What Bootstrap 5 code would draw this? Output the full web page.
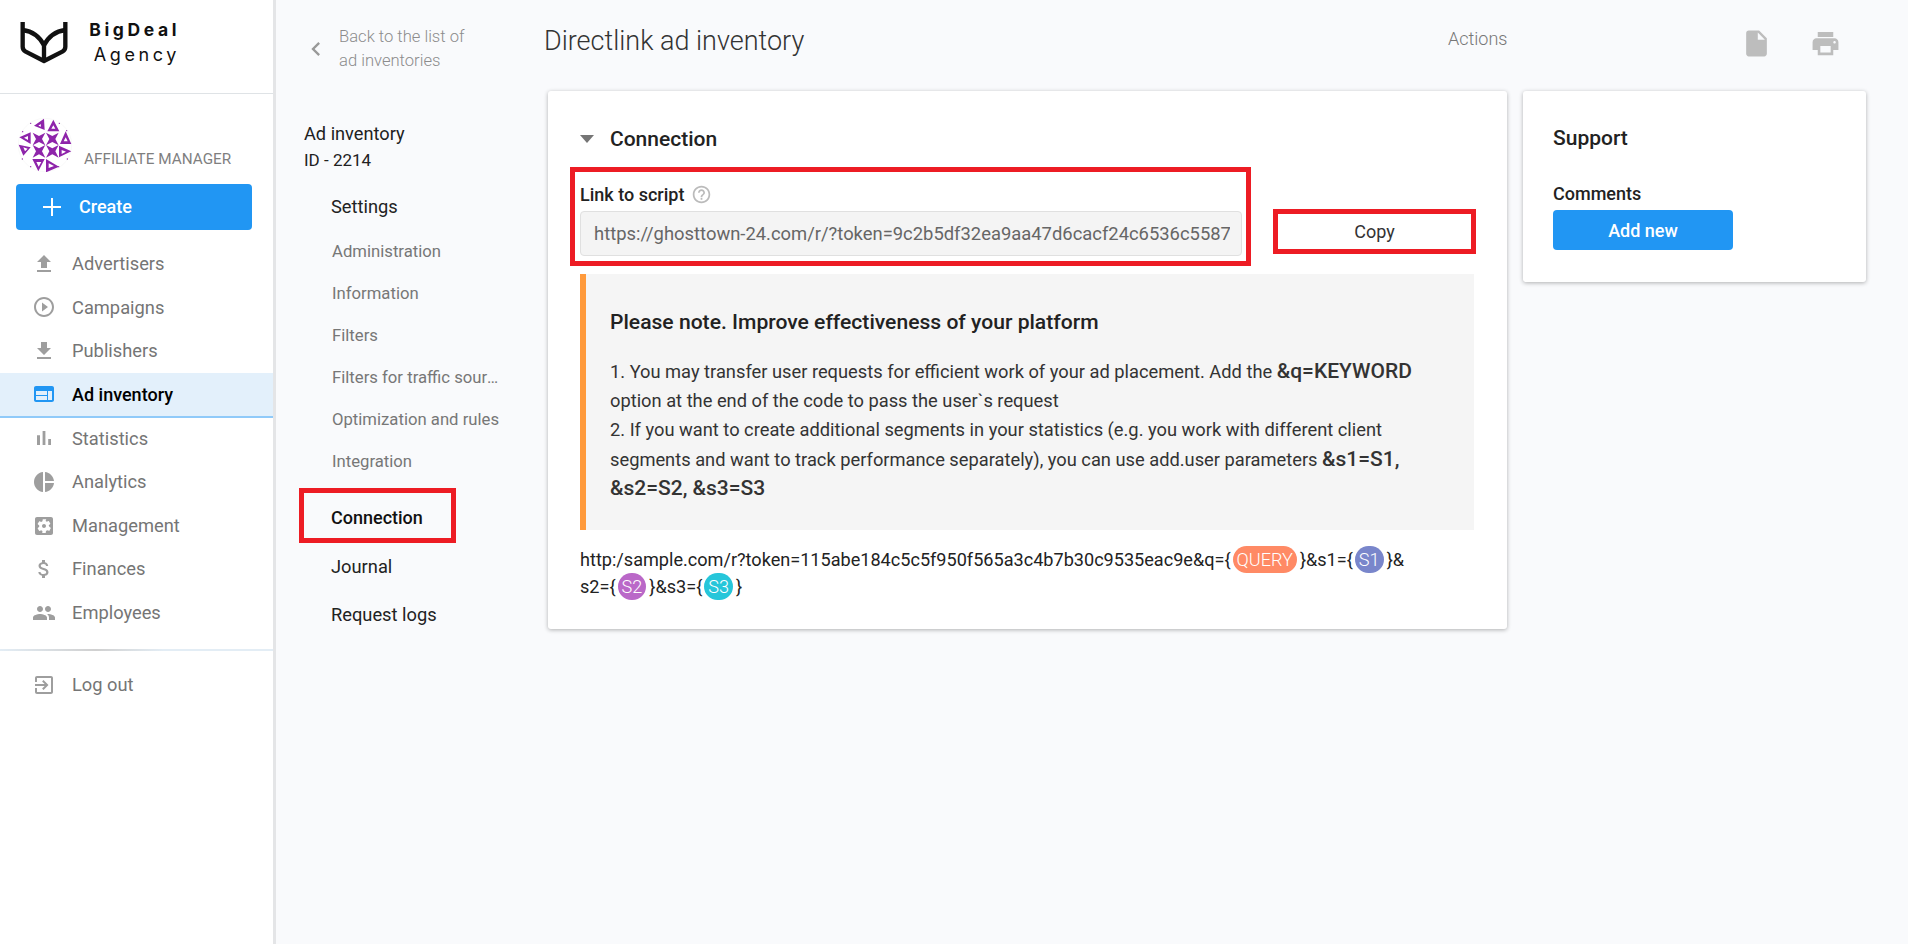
<!DOCTYPE html>
<html lang="en"><head><meta charset="utf-8"><title>Directlink ad inventory</title>
<link href="https://cdn.jsdelivr.net/npm/bootstrap@5.3.0/dist/css/bootstrap.min.css" rel="stylesheet">
<style>
html,body{height:100%}
body{background:#f9fafc;font-family:Roboto,"Liberation Sans",sans-serif;color:#212121;overflow:hidden;font-size:18px}
.shell{height:944px}
.side{width:276px;background:#fff;border-right:3px solid #e4e5e7;flex:none}
.brand{height:94px;border-bottom:1px solid #dfe3e6;padding:16px 0 0 14px;gap:12px}
.brand-txt{font-family:Inter,"Open Sans",sans-serif;color:#111;line-height:25px;letter-spacing:3.6px;font-size:18px;text-align:right;width:94px;margin-top:1px}
.brand-txt b{font-weight:700;display:block;letter-spacing:3.6px;font-size:17.5px}
.prof{padding:24px 0 0 18px;height:90px}
.prof span{font-size:15.3px;color:#7f7f7f;margin:0 0 0 12px;padding-top:30px}
.create{margin:0 0 12px 16px;width:236px;height:46px;background:#2196f3;border:0;border-radius:4px;color:#fff;font-weight:500;font-size:18px;padding:0 0 1px 27px;gap:18px}
.create:hover{background:#2196f3;color:#fff}
.mi{height:43.55px;color:#757575;font-size:18.3px;text-decoration:none;padding-left:32px;gap:16px}
.mi svg{width:24px;height:24px;fill:#9e9e9e;flex:none}
.mi.on{background:#e3f0fb;color:#000;font-weight:500;font-size:18px;border-bottom:2px solid #90caf9;height:45px;margin-bottom:-1px}
.mi.on svg{fill:#2196f3}
.rule{height:2px;margin:15px 0 12px;background:linear-gradient(90deg,#e3edf5,#d0d0d0 35%,#e3edf5 60%)}
.sub{width:264px;flex:none;padding:0 0 0 12px}
.back{height:92px;padding:6px 0 0 14px;color:#8c8c8c;font-weight:300;font-size:16.6px;line-height:24px;gap:9px;text-decoration:none}
.back svg{width:28px;height:28px;fill:#999;flex:none}
.fade{height:2px;width:237px;background:linear-gradient(90deg,transparent,#aaa 45%,transparent)}
.subhead{padding:27px 0 0 16px;line-height:26px;font-size:18.2px}
.subhead span{font-size:17px}
.subnav{margin-top:10px}
.l1{display:block;color:#222;text-decoration:none;font-size:18.3px;height:48px;line-height:48px;padding-left:43px}
.l2{display:block;color:#777;text-decoration:none;font-size:16.7px;height:42px;line-height:42px;padding:0 36px 0 44px;white-space:nowrap;overflow:hidden;text-overflow:ellipsis}
.l1.mark-box{border:5px solid #ed1c24;width:157px;height:55px;line-height:50px;font-weight:500;font-size:18px;padding-left:27px;margin:5px 0 0 11px;color:#111}
.main{width:1326px;padding-left:8px;flex:none}
.head{height:91px}
.title{font-size:27px;font-weight:300;color:#333;margin:0 0 0 -4px;padding-top:25px;width:904px;line-height:32px}
.acts{font-size:18px;font-weight:300;color:#777;padding-top:27px;width:292.5px;line-height:24px}
.headicon{width:31px;height:31px;fill:#bdbdbd;margin-top:27.5px}
.headicon+.headicon{margin-left:38px}
.pane{background:#fff;border:0;border-radius:3px;box-shadow:0 1px 4px rgba(0,0,0,.3)}
.pane1{width:959px;height:538px;padding:33px 33px 0 33px}
.pane2{width:343px;height:191px;padding:32px 30px;margin-left:16px}
.ctitle{font-size:21px;font-weight:500;line-height:30px;color:#222;margin:0}
.tri{width:0;height:0;border:7px solid transparent;border-top:8px solid #757575;border-bottom:0;margin:0 16px 0 -1px}
.red1{border:5px solid #ed1c24;flex:none;width:681px;height:99px;padding:11px 4px 0 5px;margin:13px 0 0 -11px}
.lab{font-weight:500;font-size:18px;line-height:24px;margin-bottom:4px;color:#222}
.lab svg{width:21px;height:21px;fill:#bbb;margin-left:2px;vertical-align:-4px}
.inp{height:45px;background:#f4f4f4!important;border:1px solid #e0e0e0;border-radius:4px;color:#666;font-size:18.4px;padding:0 11px 0 13px}
.copyb{border:5px solid #ed1c24;border-radius:0;background:#fff;flex:none;width:203px;height:45px;margin:55px 0 0 22px;color:#333;font-size:18px;padding:0}
.note{background:#f5f5f5;border-left:6px solid #ff9a3c;margin:8px 0 0 -1px;width:894px;height:256px;padding:30px 50px 0 24px;font-size:18.3px;line-height:29px;color:#333}
.note h5{font-size:21.1px;font-weight:500;margin:3px 0 20px;line-height:30px;color:#222}
.note b{font-weight:500;font-size:21px;line-height:1}
.note .gap{line-height:29.5px}
.samp{margin:16px 0 0 -1px;font-size:18.1px;line-height:27px;color:#222}
.chip{display:inline-block;color:#fff;font-weight:300;line-height:27px;height:27px;border-radius:14px;padding:0 4px;min-width:28px;text-align:center;margin:0 3px 0 2px}
.addb{background:#2196f3;border:0;border-radius:4px;width:180px;height:42px;color:#fff;font-weight:500;font-size:18px;padding:0}
.addb:hover{background:#2196f3;color:#fff}
.cmts{margin-top:29px}
</style></head><body>
<div class="shell d-flex">
<aside class="side">
  <div class="brand d-flex align-items-start">
    <svg width="60" height="50" viewBox="0 0 180 150"><g fill="none" stroke="#111" stroke-width="13" stroke-linejoin="round"><path d="M26 18V92Q26 102 35 107L90 135L145 107Q154 102 154 92V18"/><path d="M26 42Q70 48 90 88Q110 48 154 42"/><path d="M90 86V132"/></g></svg>
    <div class="brand-txt"><b>BigDeal</b>Agency</div>
  </div>
  <div class="prof d-flex align-items-start">
    <svg width="54" height="54" viewBox="12 12 162 162"><circle cx="93" cy="93" r="80" fill="#fff" stroke="#eee" stroke-width="1"/>
    <g fill="#8e24aa"><path d="M90 14 60 35 92 48ZM118 17 100 52H136ZM16 70 50 55V90ZM155 52 138 90H172ZM14 92 50 100 28 125ZM135 95V130L172 112ZM55 135H92L73 172ZM96 135V175L135 158Z"/>
    <path d="M56 56 75 66 94 56 84 75 94 94 75 84 56 94 66 75ZM96 56 115 66 134 56 124 75 134 94 115 84 96 94 106 75ZM56 93 75 103 94 93 84 112 94 131 75 121 56 131 66 112ZM96 93 115 103 134 93 124 112 134 131 115 121 96 131 106 112Z"/>
    <circle cx="50" cy="28" r="2"/><circle cx="136" cy="28" r="2"/><circle cx="158" cy="50" r="2"/><circle cx="26" cy="53" r="2"/><circle cx="50" cy="158" r="2"/><circle cx="134" cy="158" r="2"/><circle cx="25" cy="135" r="2"/><circle cx="160" cy="135" r="2"/></g>
    <g fill="#fff"><path d="M80 30 73 35 81 38ZM118 34 112 44H124ZM30 71 42 66V78ZM155 70 149 82H161ZM28 100 41 104 33 112ZM143 108V120L156 113ZM67 144H82L74 158ZM104 148V162L120 156Z"/></g></svg>
    <span>AFFILIATE MANAGER</span>
  </div>
  <button class="btn create d-flex align-items-center" type="button"><svg width="18" height="18" viewBox="0 0 18 18"><path d="M8 0h2v8h8v2h-8v8H8v-8H0V8h8z" fill="#fff"/></svg>Create</button>
  <nav>
    <a class="mi d-flex align-items-center" href="#"><svg viewBox="0 0 24 24"><path d="M9 16h6v-6h4l-7-7-7 7h4zm-4 2h14v2H5z"/></svg>Advertisers</a>
    <a class="mi d-flex align-items-center" href="#"><svg viewBox="0 0 24 24"><path d="M10 16.5l6-4.5-6-4.5v9zM12 2C6.48 2 2 6.48 2 12s4.48 10 10 10 10-4.48 10-10S17.52 2 12 2zm0 18c-4.41 0-8-3.59-8-8s3.59-8 8-8 8 3.59 8 8-3.59 8-8 8z"/></svg>Campaigns</a>
    <a class="mi d-flex align-items-center" href="#"><svg viewBox="0 0 24 24"><path d="M19 9h-4V3H9v6H5l7 7 7-7zM5 18v2h14v-2H5z"/></svg>Publishers</a>
    <a class="mi on d-flex align-items-center" href="#"><svg viewBox="0 0 24 24"><path d="M20 4H4c-1.1 0-1.99.9-1.99 2L2 18c0 1.1.9 2 2 2h16c1.1 0 2-.9 2-2V6c0-1.1-.9-2-2-2zm-5 14H4v-4h11v4zm0-5H4V9h11v4zm5 5h-4V9h4v9z"/></svg>Ad inventory</a>
    <a class="mi d-flex align-items-center" href="#"><svg viewBox="0 0 24 24"><path d="M5 9.2h3V19H5zM10.6 5h2.8v14h-2.8zm5.6 8H19v6h-2.8z"/></svg>Statistics</a>
    <a class="mi d-flex align-items-center" href="#"><svg viewBox="0 0 24 24"><path d="M11 2v20c-5.07-.5-9-4.79-9-10s3.93-9.5 9-10zm2.03 0v8.99H22c-.47-4.74-4.24-8.52-8.97-8.99zm0 11.01V22c4.74-.47 8.5-4.25 8.97-8.99h-8.97z"/></svg>Analytics</a>
    <a class="mi d-flex align-items-center" href="#"><svg viewBox="0 0 24 24"><path d="M12 10c-1.1 0-2 .9-2 2s.9 2 2 2 2-.9 2-2-.9-2-2-2zm7-7H5c-1.11 0-2 .9-2 2v14c0 1.1.89 2 2 2h14c1.11 0 2-.9 2-2V5c0-1.1-.89-2-2-2zm-1.75 9c0 .23-.02.46-.05.68l1.48 1.16c.13.11.17.3.08.45l-1.4 2.42c-.09.15-.27.21-.43.15l-1.74-.7c-.36.28-.76.51-1.18.69l-.26 1.85c-.03.17-.18.3-.35.3h-2.8c-.17 0-.32-.13-.35-.3L10.46 17c-.43-.18-.82-.41-1.18-.69l-1.74.7c-.16.06-.34 0-.43-.15l-1.4-2.42c-.09-.15-.05-.34.08-.45l1.48-1.16c-.03-.22-.05-.45-.05-.68 0-.23.02-.46.05-.68l-1.48-1.16c-.13-.11-.17-.3-.08-.45l1.4-2.42c.09-.15.27-.21.43-.15l1.74.7c.36-.28.76-.51 1.18-.69l.26-1.85c.03-.17.18-.3.35-.3h2.8c.17 0 .32.13.35.3L13.54 7c.43.18.82.41 1.18.69l1.74-.7c.16-.06.34 0 .43.15l1.4 2.42c.09.15.05.34-.08.45l-1.48 1.16c.03.22.05.45.05.68z"/></svg>Management</a>
    <a class="mi d-flex align-items-center" href="#"><svg viewBox="0 0 24 24"><path d="M11.8 10.9c-2.27-.59-3-1.2-3-2.15 0-1.09 1.01-1.85 2.7-1.85 1.78 0 2.44.85 2.5 2.1h2.21c-.07-1.72-1.12-3.3-3.21-3.81V3h-3v2.16c-1.94.42-3.5 1.68-3.5 3.61 0 2.31 1.91 3.46 4.7 4.13 2.5.6 3 1.48 3 2.41 0 .69-.49 1.79-2.7 1.79-2.06 0-2.87-.92-2.98-2.1h-2.2c.12 2.19 1.76 3.42 3.68 3.83V21h3v-2.15c1.95-.37 3.5-1.5 3.5-3.55 0-2.84-2.43-3.81-4.7-4.4z"/></svg>Finances</a>
    <a class="mi d-flex align-items-center" href="#"><svg viewBox="0 0 24 24"><path d="M16 11c1.66 0 2.99-1.34 2.99-3S17.66 5 16 5c-1.66 0-3 1.34-3 3s1.34 3 3 3zm-8 0c1.66 0 2.99-1.34 2.99-3S9.66 5 8 5C6.34 5 5 6.34 5 8s1.34 3 3 3zm0 2c-2.33 0-7 1.17-7 3.5V19h14v-2.5c0-2.33-4.67-3.5-7-3.5zm8 0c-.29 0-.62.02-.97.05 1.16.84 1.97 1.97 1.97 3.45V19h6v-2.5c0-2.33-4.67-3.5-7-3.5z"/></svg>Employees</a>
    <div class="rule"></div>
    <a class="mi d-flex align-items-center" href="#"><svg viewBox="0 0 24 24"><path d="M10.09 15.59L11.5 17l5-5-5-5-1.41 1.41L12.67 11H3v2h9.67l-2.58 2.59zM19 3H5c-1.11 0-2 .9-2 2v4h2V5h14v14H5v-4H3v4c0 1.1.89 2 2 2h14c1.1 0 2-.9 2-2V5c0-1.1-.9-2-2-2z"/></svg>Log out</a>
  </nav>
</aside>
<section class="sub">
  <a class="back d-flex align-items-center" href="#"><svg viewBox="0 0 24 24"><path d="M15.41 7.41L14 6l-6 6 6 6 1.41-1.41L10.83 12z"/></svg><span>Back to the list of<br>ad inventories</span></a>
  <div class="fade"></div>
  <div class="subhead">Ad inventory<br><span>ID - 2214</span></div>
  <div class="subnav">
    <a class="l1" href="#">Settings</a>
    <a class="l2" href="#">Administration</a>
    <a class="l2" href="#">Information</a>
    <a class="l2" href="#">Filters</a>
    <a class="l2" href="#">Filters for traffic sources</a>
    <a class="l2" href="#">Optimization and rules</a>
    <a class="l2" href="#">Integration</a>
    <a class="l1 mark-box" href="#">Connection</a>
    <a class="l1" href="#">Journal</a>
    <a class="l1" href="#">Request logs</a>
  </div>
</section>
<main class="main">
  <div class="head d-flex align-items-start">
    <h1 class="title">Directlink ad inventory</h1>
    <div class="acts">Actions</div>
    <svg class="headicon" viewBox="0 0 24 24"><path d="M6 2c-1.1 0-1.99.9-1.99 2L4 20c0 1.1.89 2 1.99 2H18c1.1 0 2-.9 2-2V8l-6-6H6zm7 7V3.5L18.5 9H13z"/></svg>
    <svg class="headicon" viewBox="0 0 24 24"><path d="M19 8H5c-1.66 0-3 1.34-3 3v6h4v4h12v-4h4v-6c0-1.66-1.34-3-3-3zm-3 11H8v-5h8v5zm3-7c-.55 0-1-.45-1-1s.45-1 1-1 1 .45 1 1-.45 1-1 1zm-1-9H6v4h12V3z"/></svg>
  </div>
  <div class="d-flex align-items-start">
    <div class="card pane pane1">
      <div class="d-flex align-items-center"><span class="tri"></span><h2 class="ctitle">Connection</h2></div>
      <div class="d-flex align-items-start">
        <div class="red1">
          <div class="lab">Link to script <svg viewBox="0 0 24 24"><path d="M11 18h2v-2h-2v2zm1-16C6.48 2 2 6.48 2 12s4.48 10 10 10 10-4.48 10-10S17.52 2 12 2zm0 18c-4.41 0-8-3.59-8-8s3.59-8 8-8 8 3.59 8 8-3.59 8-8 8zm0-14c-2.21 0-4 1.79-4 4h2c0-1.1.9-2 2-2s2 .9 2 2c0 2-3 1.75-3 5h2c0-2.25 3-2.5 3-5 0-2.21-1.79-4-4-4z"/></svg></div>
          <input class="form-control inp" readonly value="https://ghosttown-24.com/r/?token=9c2b5df32ea9aa47d6cacf24c6536c5587b0a1e2d4f6">
        </div>
        <button class="btn copyb" type="button">Copy</button>
      </div>
      <div class="note">
        <h5>Please note. Improve effectiveness of your platform</h5>
        <div>1. You may transfer user requests for efficient work of your ad placement. Add the <b>&amp;q=KEYWORD</b> option at the end of the code to pass the user`s request</div>
        <div class="gap">2. If you want to create additional segments in your statistics (e.g. you work with different client segments and want to track performance separately), you can use add.user parameters <b>&amp;s1=S1, &amp;s2=S2, &amp;s3=S3</b></div>
      </div>
      <div class="samp">http:/sample.com/r?token=115abe184c5c5f950f565a3c4b7b30c9535eac9e&amp;q={<span class="chip" style="background:#ff8a65">QUERY</span>}&amp;s1={<span class="chip" style="background:#7986cb">S1</span>}&amp;<br>s2={<span class="chip" style="background:#ba68c8">S2</span>}&amp;s3={<span class="chip" style="background:#26c6da">S3</span>}</div>
    </div>
    <div class="card pane pane2">
      <h2 class="ctitle">Support</h2>
      <div class="lab cmts">Comments</div>
      <button class="btn addb" type="button">Add new</button>
    </div>
  </div>
</main>
</div>
<script src="https://cdn.jsdelivr.net/npm/bootstrap@5.3.0/dist/js/bootstrap.bundle.min.js"></script>
</body></html>
